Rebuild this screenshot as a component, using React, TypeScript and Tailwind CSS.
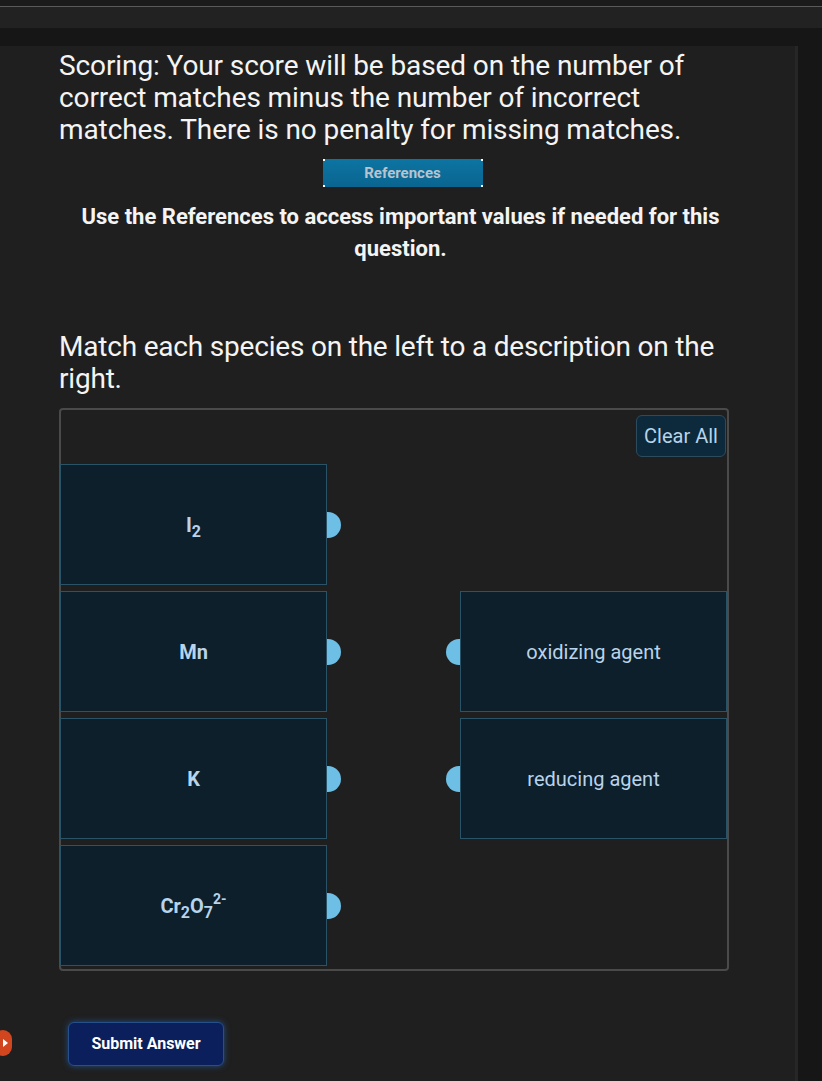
import React from "react";

const Card = ({ children, side }: { children: React.ReactNode; side: "left" | "right" }) => (
  <div className="relative h-[121px] w-[267px] bg-[#0c1f2b] border border-[#2b5368] flex items-center justify-center text-[20px] font-bold text-[#b9d3ea]">
    {side === "right" ? (
      <span className="font-normal">{children}</span>
    ) : (
      <span>{children}</span>
    )}
    {side === "left" ? (
      <div className="absolute right-[-15px] top-1/2 -translate-y-1/2 w-[14px] h-[26px] rounded-r-full bg-[#6dbfe6]" />
    ) : (
      <div className="absolute left-[-15px] top-1/2 -translate-y-1/2 w-[14px] h-[26px] rounded-l-full bg-[#6dbfe6]" />
    )}
  </div>
);

const Sub = ({ children }: { children: React.ReactNode }) => (
  <span className="text-[16px] relative top-[5px]">{children}</span>
);

export default function App() {
  return (
    <div className="w-[822px] h-[1081px] bg-[#161616] overflow-hidden relative" style={{ fontFamily: "Roboto, 'Noto Sans', sans-serif" }}>
      <div className="h-[6px] bg-[#1b1b1b]" />
      <div className="h-[1px] bg-[#5a5a5a]" />
      <div className="h-[21px] bg-[#222222]" />
      <div className="h-[18px] bg-[#161616]" />
      <div className="flex h-[1035px]">
        <div className="w-[798px] bg-[#1f1f1f] border-r-[3px] border-[#262626] pl-[59px] pr-[53px] pt-[4px]">
          <p className="text-[28px] leading-[32px] text-[#f4f4f4] tracking-[-0.1px] w-[650px]">
            Scoring: Your score will be based on the number of correct matches minus the number of incorrect matches. There is no penalty for missing matches.
          </p>
          <div className="flex justify-center mt-[13px] pl-[4px]">
            <div className="relative w-[160px] h-[28px] bg-gradient-to-b from-[#0d74a2] to-[#0a6590] flex items-center justify-center text-[15px] font-bold text-[#b7c4cf]">
              References
              <span className="absolute left-0 top-0 w-[2px] h-[2px] bg-white" />
              <span className="absolute right-0 top-0 w-[2px] h-[2px] bg-white" />
              <span className="absolute left-0 bottom-0 w-[2px] h-[2px] bg-white" />
              <span className="absolute right-0 bottom-0 w-[2px] h-[2px] bg-white" />
            </div>
          </div>
          <p className="mt-[14px] text-center text-[22px] leading-[32px] font-bold text-[#f4f4f4]">
            Use the References to access important values if needed for this question.
          </p>
          <p className="mt-[66px] text-[28px] leading-[32px] text-[#f4f4f4] tracking-[-0.2px]">
            Match each species on the left to a description on the right.
          </p>
          <div className="mt-[13px] w-[670px] h-[563px] border-2 border-[#4a4a4a] rounded-[4px] relative">
            <div className="flex justify-end pr-[1px] pt-[5px]">
              <div className="w-[90px] h-[42px] bg-[#0c2a3b] border border-[#2c4c5e] rounded-[6px] flex items-center justify-center text-[20px] text-[#b6d4ea]">
                Clear All
              </div>
            </div>
            <div className="flex justify-between mt-[7px]">
              <div className="flex flex-col gap-[6px] -ml-[1px]">
                <Card side="left">
                  <span>I<Sub>2</Sub></span>
                </Card>
                <Card side="left">Mn</Card>
                <Card side="left">K</Card>
                <Card side="left">
                  <span>
                    Cr<Sub>2</Sub>O<Sub>7</Sub>
                    <span className="text-[14px] relative top-[-9px]">2-</span>
                  </span>
                </Card>
              </div>
              <div className="flex flex-col gap-[6px] pt-[127px]">
                <Card side="right">oxidizing agent</Card>
                <Card side="right">reducing agent</Card>
              </div>
            </div>
          </div>
          <div className="mt-[51px] ml-[9px] w-[156px] h-[44px] bg-[#0a1f5c] border border-[#25508a] rounded-[6px] shadow-[0_0_6px_rgba(40,110,200,0.6)] flex items-center justify-center text-[16px] font-bold text-white">
            Submit Answer
          </div>
        </div>
        <div className="flex-1 bg-[#161616]" />
      </div>
      <div className="absolute left-[-6px] top-[1030px] w-[18px] h-[26px] rounded-full bg-[#d2461f] flex items-center justify-end pr-[4px]">
        <div className="w-0 h-0 border-y-[4px] border-y-transparent border-l-[5px] border-l-white" />
      </div>
    </div>
  );
}
